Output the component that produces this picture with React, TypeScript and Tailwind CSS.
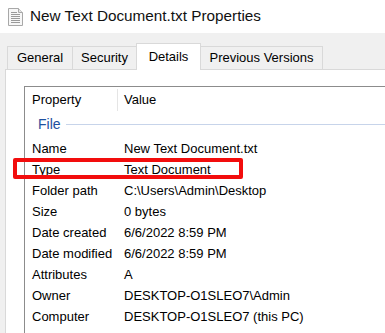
import React from 'react'

const ROWS = [
  { k: 'Name', v: 'New Text Document.txt' },
  { k: 'Type', v: 'Text Document', mark: true },
  { k: 'Folder path', v: 'C:\\Users\\Admin\\Desktop' },
  { k: 'Size', v: '0 bytes' },
  { k: 'Date created', v: '6/6/2022 8:59 PM' },
  { k: 'Date modified', v: '6/6/2022 8:59 PM' },
  { k: 'Attributes', v: 'A' },
  { k: 'Owner', v: 'DESKTOP-O1SLEO7\\Admin' },
  { k: 'Computer', v: 'DESKTOP-O1SLEO7 (this PC)' },
]

function DocIcon() {
  return (
    <svg width="15" height="18" viewBox="0 0 15 18">
      <path d="M0.5 0.5 H10.5 L14.5 4.5 V17.5 H0.5 Z" fill="#f7f7f7" stroke="#a8a8a8" />
      <path d="M10.5 0.5 V4.5 H14.5" fill="#e4e4e4" stroke="#a8a8a8" />
      {[6, 8, 10, 12, 14].map(y => (
        <line key={y} x1="3" x2="12" y1={y + 0.5} y2={y + 0.5} stroke="#9a9a9a" />
      ))}
      <line x1="3" x2="9" y1="4.5" y2="4.5" stroke="#9a9a9a" />
    </svg>
  )
}

export default function App() {
  return (
    <div className="w-[385px] h-[333px] overflow-hidden bg-[#f0f0f0] flex flex-col text-black font-['Liberation_Sans',Arial,sans-serif]">
      {/* Title bar */}
      <div className="h-[33px] bg-white flex items-center pl-[8px] shrink-0">
        <DocIcon />
        <span className="ml-[7px] text-[15.3px] text-[#111]">New Text Document.txt Properties</span>
      </div>

      {/* Tabs */}
      <div className="pt-[9px] pl-[7px] flex items-end h-[36px] shrink-0 text-[13px] relative z-10">
        <div className="w-[65px] h-[23px] border-t border-l border-[#d9d9d9] flex items-center justify-center">General</div>
        <div className="w-[64px] h-[23px] border-t border-l border-[#d9d9d9] flex items-center justify-center">Security</div>
        <div className="w-[65px] h-[27px] -mb-px bg-white border-t border-l border-r border-[#d9d9d9] flex items-start pt-[3px] justify-center">Details</div>
        <div className="w-[122px] h-[23px] border-t border-r border-[#d9d9d9] flex items-center justify-center">Previous Versions</div>
      </div>

      {/* Panel */}
      <div className="ml-[5px] flex-1 bg-white border-l border-t border-[#d9d9d9] pl-[18px] pt-[16px]">
        <div className="h-full border-l border-t border-[#8c8c8c] text-[13px]">
          <div className="h-[26px] flex items-center">
            <div className="w-[92px] pl-[7px]">Property</div>
            <div className="w-px h-[22px] bg-[#e5e5e5]" />
            <div className="pl-[6px]">Value</div>
          </div>
          <div className="h-[22px] flex items-center">
            <span className="pl-[13px] text-[#1e50a0] text-[14px]">File</span>
            <div className="ml-[5px] flex-1 h-px bg-[#c7d4ea]" />
          </div>
          <div className="pt-[3px]">
            {ROWS.map(r => (
              <div key={r.k} className="relative h-[21px] flex items-center">
                <div className="w-[99px] pl-[7px] shrink-0">{r.k}</div>
                <div>{r.v}</div>
                {r.mark && (
                  <div className="absolute left-[-12px] top-[-1px] w-[230px] h-[21px] border-4 border-[#f20d0d] rounded-[2px]" />
                )}
              </div>
            ))}
          </div>
        </div>
      </div>
    </div>
  )
}
